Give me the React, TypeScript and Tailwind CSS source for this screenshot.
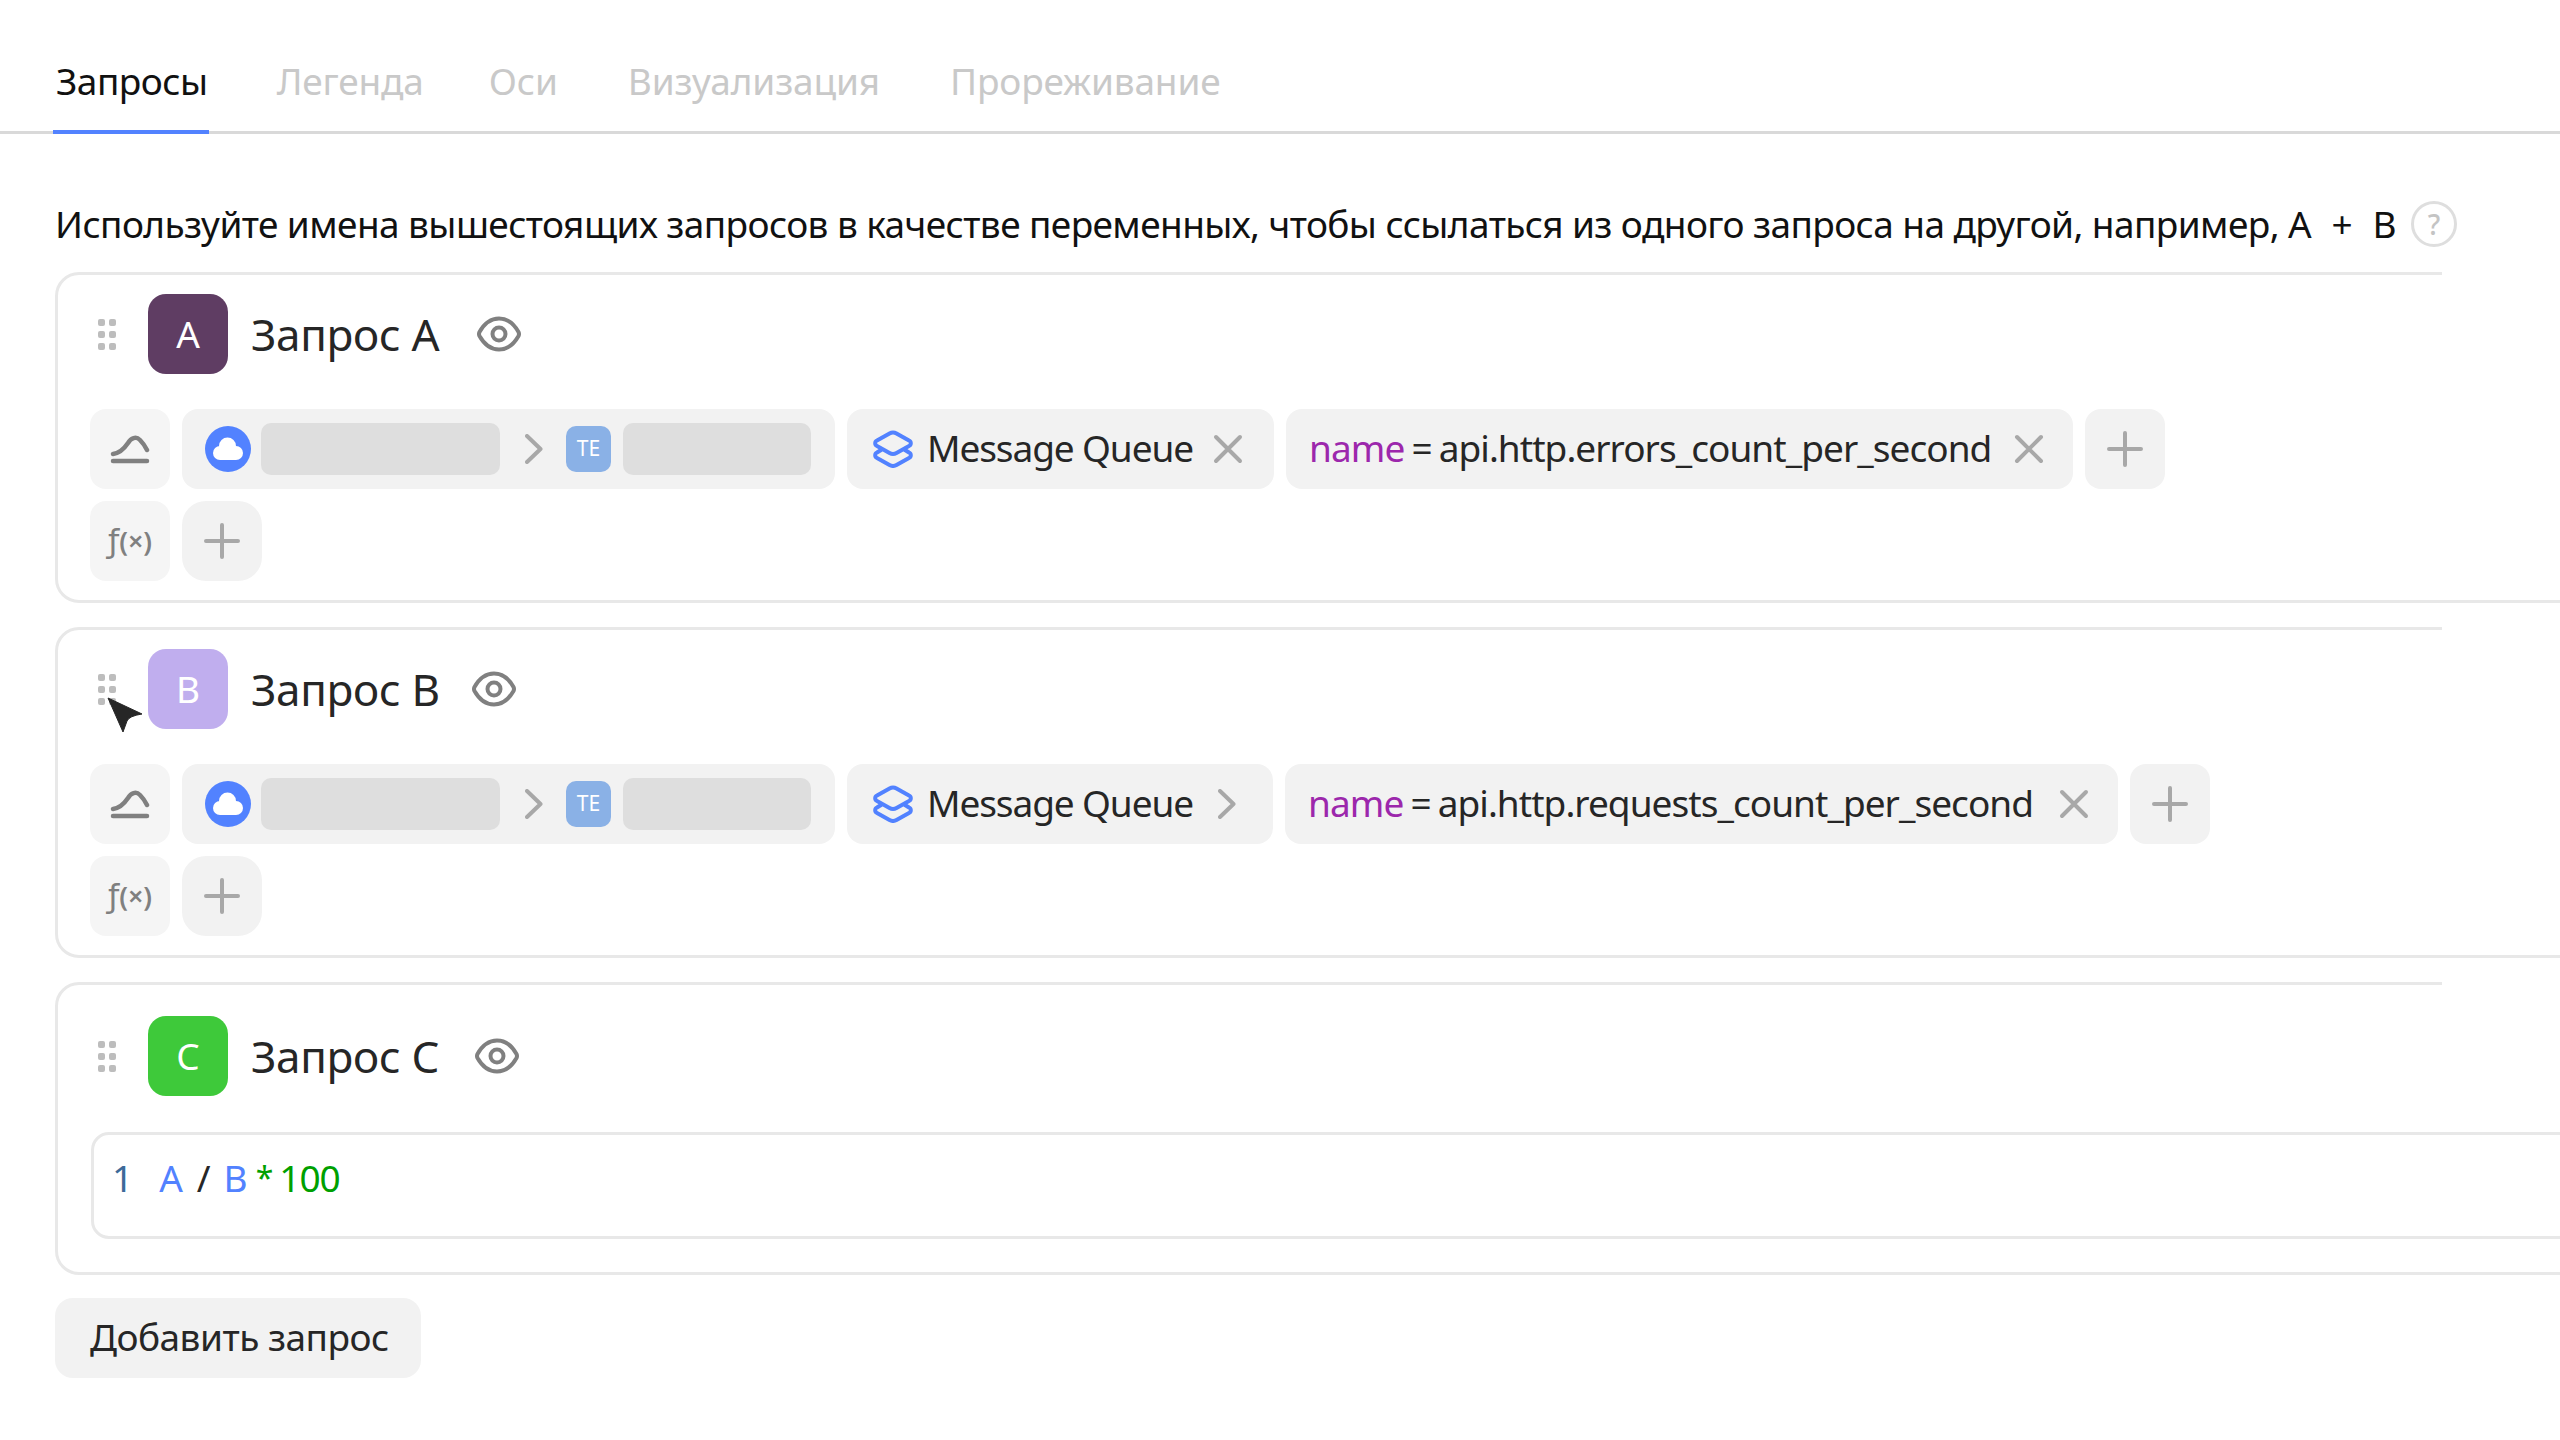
import type { ReactNode } from "react";

const tabs = [
  { label: "Легенда", cls: "ml-[68px]" },
  { label: "Оси", cls: "ml-[65px]" },
  { label: "Визуализация", cls: "ml-[70px]" },
  { label: "Прореживание", cls: "ml-[70px]" },
];

function DragDots() {
  return (
    <div className="ml-[8px] grid w-[18px] grid-cols-2 gap-x-[4px] gap-y-[5px]">
      {[0, 1, 2, 3, 4, 5].map((i) => (
        <span key={i} className="h-[7px] w-[7px] rounded-[2px] bg-[#bdbdbd]" />
      ))}
    </div>
  );
}

function EyeIcon() {
  return (
    <svg width="46" height="36" viewBox="0 0 46 36" fill="none" stroke="#808080" strokeWidth="4">
      <path d="M3.5 16 C8 8 15 2.5 23 2.5 C31 2.5 38 8 42.5 16 Q43.5 18 42.5 20 C38 28 31 33.5 23 33.5 C15 33.5 8 28 3.5 20 Q2.500 18 3.500 16Z" />
      <circle cx="23" cy="18" r="6.500" />
    </svg>
  );
}

function SparkIcon({ color }: { color: string }) {
  return (
    <svg width="40" height="30" viewBox="0 0 40 30" fill="none" stroke={color} strokeWidth="4.500" strokeLinecap="round">
      <path d="M3 20 C10 19 14 15 18 9 C21 4 26 2 30 6 C33 9 35 12 37 16" />
      <path d="M3 27 H37" />
    </svg>
  );
}

function CloudBadge() {
  return (
    <svg width="46" height="46" viewBox="0 0 46 46">
      <circle cx="23" cy="23" r="23" fill="#5282ff" />
      <g fill="#fff">
        <circle cx="15" cy="27" r="7" />
        <circle cx="22.500" cy="20" r="8.500" />
        <circle cx="31" cy="27" r="7" />
        <rect x="15" y="25" width="16" height="9" />
      </g>
    </svg>
  );
}

function LayersIcon() {
  return (
    <svg width="42" height="38" viewBox="0 0 42 38" fill="none" stroke="#5282ff" strokeWidth="4" strokeLinejoin="round" strokeLinecap="round">
      <path d="M17.500 3.500 a7 7 0 0 1 7 0 L37 10.500 a3 3 0 0 1 0 5.500 L24.500 23 a7 7 0 0 1 -7 0 L5 16 a3 3 0 0 1 0 -5.500 Z" />
      <path d="M9 20 L5 22.500 a3 3 0 0 0 0 5.500 L17.500 35 a7 7 0 0 0 7 0 L37 28 a3 3 0 0 0 0 -5.500 L33 20" />
    </svg>
  );
}

function CloseIcon() {
  return (
    <svg width="30" height="30" viewBox="0 0 30 30" fill="none" stroke="#a8a8a8" strokeWidth="4" strokeLinecap="round">
      <path d="M3 3 L27 27 M27 3 L3 27" />
    </svg>
  );
}

function PlusIcon() {
  return (
    <svg width="36" height="36" viewBox="0 0 36 36" fill="none" stroke="#a8a8a8" strokeWidth="4" strokeLinecap="round">
      <path d="M18 2 V34 M2 18 H34" />
    </svg>
  );
}

function Chevron() {
  return (
    <svg width="18" height="30" viewBox="0 0 18 30" fill="none" stroke="#a8a8a8" strokeWidth="4" strokeLinecap="round" strokeLinejoin="round">
      <path d="M2 2 L15.500 15 L2 28" />
    </svg>
  );
}

function Cursor() {
  return (
    <svg className="absolute left-[49px] top-[67px]" width="36" height="36" viewBox="0 0 36 36" fill="#262626">
      <path d="M1 1 L35 17 Q22 19 20 24 L16 35 Z" stroke="#262626" strokeLinejoin="round" />
    </svg>
  );
}

function SourceGroup() {
  return (
    <div className="flex h-[80px] w-[653px] items-center rounded-[16px] bg-[#f2f2f2] pl-[23px]">
      <CloudBadge />
      <div className="ml-[10px] h-[52px] w-[239px] rounded-[10px] bg-[#dedede]" />
      <div className="ml-[25px]">
        <Chevron />
      </div>
      <div className="ml-[23px] flex h-[46px] w-[45px] items-center justify-center rounded-[10px] bg-[#8ab1e6] text-[21px] text-white">
        TE
      </div>
      <div className="ml-[12px] h-[52px] w-[188px] rounded-[10px] bg-[#dedede]" />
    </div>
  );
}

function QueryRows({
  value,
  chipEnd,
  chipWidth,
  filterWidth,
}: {
  value: string;
  chipEnd: ReactNode;
  chipWidth: string;
  filterWidth: string;
}) {
  return (
    <div className="mt-[35px] flex flex-col gap-[12px] pl-[32px]">
      <div className="flex gap-[12px]">
        <div className="flex h-[80px] w-[80px] items-center justify-center rounded-[16px] bg-[#f5f5f5]">
          <SparkIcon color="#808080" />
        </div>
        <SourceGroup />
        <div className={`flex h-[80px] items-center rounded-[16px] bg-[#f2f2f2] pl-[25px] ${chipWidth}`}>
          <LayersIcon />
          <span className="ml-[13px] w-[266px] whitespace-nowrap pb-[2px] text-[37px] tracking-[-1.100px] text-[#262626]">
            Message Queue
          </span>
          {chipEnd}
        </div>
        <div className={`flex h-[80px] items-center rounded-[16px] bg-[#f2f2f2] pl-[23px] ${filterWidth}`}>
          <span className="whitespace-nowrap pb-[2px] text-[37px] tracking-[-0.900px] text-[#9c27ac]">name</span>
          <span className="ml-[7px] pb-[2px] text-[37px] text-[#262626]">=</span>
          <span className="ml-[6px] whitespace-nowrap pb-[2px] text-[37px] tracking-[-0.950px] text-[#262626]">{value}</span>
          <span className="ml-auto mr-[29px]">
            <CloseIcon />
          </span>
        </div>
        <div className="flex h-[80px] w-[80px] items-center justify-center rounded-[16px] bg-[#f2f2f2]">
          <PlusIcon />
        </div>
      </div>
      <div className="flex gap-[12px]">
        <div className="flex h-[80px] w-[80px] items-center justify-center rounded-[16px] bg-[#f5f5f5] text-[#808080]">
          <span className="font-['DejaVu_Sans',sans-serif] text-[32px]">ƒ</span>
          <span className="text-[27px] font-semibold">(×)</span>
        </div>
        <div className="flex h-[80px] w-[80px] items-center justify-center rounded-[24px] bg-[#f2f2f2]">
          <PlusIcon />
        </div>
      </div>
    </div>
  );
}

function QueryCard({
  badge,
  letter,
  name,
  eyeGap,
  topPad,
  bottomPad,
  children,
  overlay,
}: {
  badge: string;
  letter: string;
  name: string;
  eyeGap: string;
  topPad: string;
  bottomPad: string;
  children: ReactNode;
  overlay?: ReactNode;
}) {
  return (
    <section className={`relative -mr-[80px] rounded-[24px] border-[3px] border-[#e8e8e8] ${topPad} ${bottomPad}`}>
      {/* the top edge stops short of the window's right side */}
      <div className="absolute right-[-3px] top-[-3px] h-[3px] w-[143px] bg-white" />
      <div className="flex items-center pl-[32px]">
        <DragDots />
        <div className={`ml-[32px] flex h-[80px] w-[80px] items-center justify-center rounded-[18px] text-[37px] text-white ${badge}`}>
          {letter}
        </div>
        <h2 className="ml-[23px] whitespace-nowrap text-[44px] font-normal tracking-[-0.300px] text-[#262626]">Запрос {name}</h2>
        <span className={eyeGap}>
          <EyeIcon />
        </span>
      </div>
      {children}
      {overlay}
    </section>
  );
}

export default function App() {
  return (
    <div className="h-[1440px] w-[2560px] overflow-hidden bg-white font-['Noto_Sans',sans-serif]">
      <nav className="flex h-[134px] items-end border-b-[3px] border-[#d9d9d9] pb-[23px] pl-[53px] text-[37px] tracking-[-0.150px] text-[#c9c9c9]">
        <div className="relative pl-[3px] pr-[1px] tracking-[-0.500px] text-[#111]">
          Запросы
          <div className="absolute bottom-[-26px] left-0 right-0 h-[4px] bg-[#5282ff]" />
        </div>
        {tabs.map((t) => (
          <div key={t.label} className={t.cls}>
            {t.label}
          </div>
        ))}
      </nav>

      <div className="px-[55px]">
        <p className="mt-[67px] flex h-[46px] items-center whitespace-nowrap text-[37px] tracking-[-0.580px] text-[#111]">
          Используйте имена вышестоящих запросов в качестве переменных, чтобы ссылаться из одного запроса на другой, например,&nbsp;
          <span className="tracking-[0.200px]">A&nbsp;&nbsp;+&nbsp;&nbsp;B</span>
          <span className="ml-[14px] flex h-[46px] w-[46px] shrink-0 items-center justify-center rounded-full border-[3px] border-[#dedede] text-[28px] font-medium text-[#c4c4c4]">
            ?
          </span>
        </p>

        <div className="mt-[25px] flex flex-col gap-[24px]">
          <QueryCard badge="bg-[#5f3d63]" letter="A" name="A" eyeGap="ml-[37px]" topPad="pt-[19px]" bottomPad="pb-[19px]">
            <QueryRows
              value="api.http.errors_count_per_second"
              chipWidth="w-[427px]"
              filterWidth="w-[787px]"
              chipEnd={
                <span className="ml-[20px]">
                  <CloseIcon />
                </span>
              }
            />
          </QueryCard>

          <QueryCard
            badge="bg-[#c0aeee]"
            letter="B"
            name="B"
            eyeGap="ml-[31px]"
            topPad="pt-[19px]"
            bottomPad="pb-[19px]"
            overlay={<Cursor />}
          >
            <QueryRows
              value="api.http.requests_count_per_second"
              chipWidth="w-[426px]"
              filterWidth="w-[833px]"
              chipEnd={
                <span className="ml-[25px]">
                  <Chevron />
                </span>
              }
            />
          </QueryCard>

          <QueryCard badge="bg-[#3ec93a]" letter="C" name="C" eyeGap="ml-[35px]" topPad="pt-[31px]" bottomPad="pb-[33px]">
            <div className="mt-[36px] ml-[33px] flex h-[107px] items-center rounded-[18px] border-[3px] border-[#e8e8e8] pb-[16px] pl-[18px] text-[37px]">
              <span className="text-[#3d6a99]">1</span>
              <span className="ml-[26px] text-[#5282ff]">A</span>
              <span className="ml-[14px] text-[#262626]">/</span>
              <span className="ml-[13px] text-[#5282ff]">B</span>
              <span className="ml-[8px] text-[32px] text-[#00a000]">*</span>
              <span className="ml-[6px] tracking-[-1px] text-[#00a000]">100</span>
            </div>
          </QueryCard>
        </div>

        <button className="mt-[23px] flex h-[80px] w-[366px] items-center rounded-[18px] bg-[#f2f2f2] pb-[2px] pl-[35px] text-[37px] tracking-[-0.500px] text-[#262626]">
          Добавить запрос
        </button>
      </div>
    </div>
  );
}
